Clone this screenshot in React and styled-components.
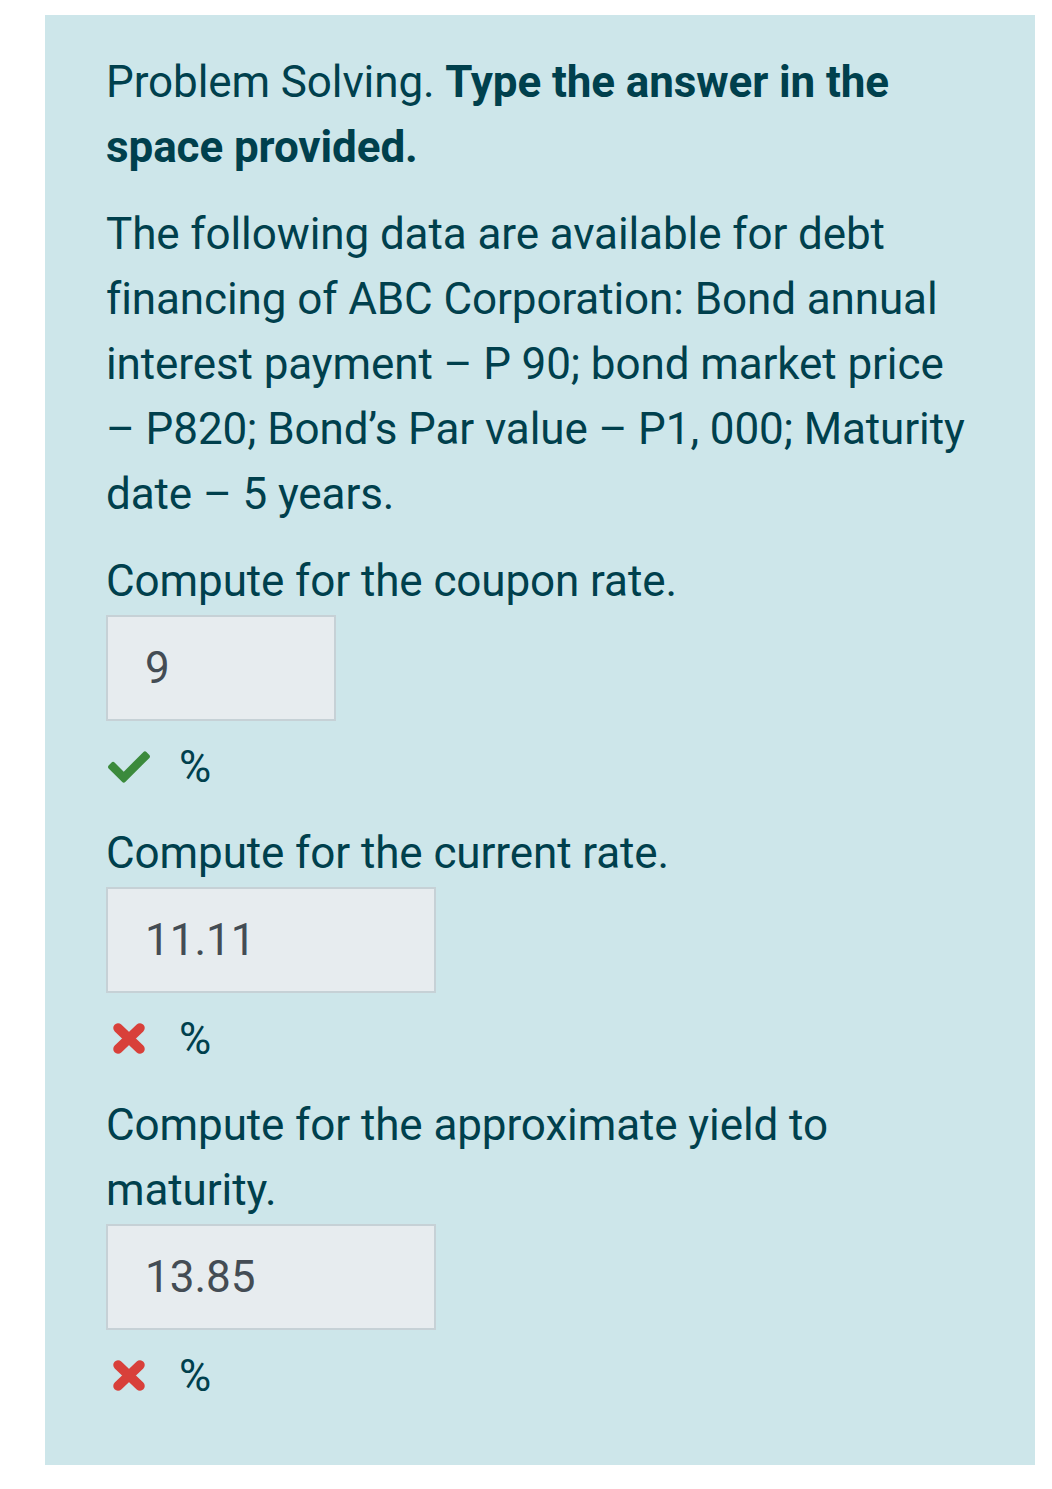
import React from "react";
import styled, { createGlobalStyle } from "styled-components";
import { FaCheck } from "react-icons/fa";

const GlobalStyle = createGlobalStyle`
  html, body {
    margin: 0;
    padding: 0;
    background: #ffffff;
  }
  body {
    font-family: Roboto, "Noto Sans", "Liberation Sans", sans-serif;
  }
`;

const questions = [
  { label: "Compute for the coupon rate.", value: "9", width: 230, correct: true },
  { label: "Compute for the current rate.", value: "11.11", width: 330, correct: false },
  {
    label: "Compute for the approximate yield to maturity.",
    value: "13.85",
    width: 330,
    correct: false,
  },
];

// heavy cross used for wrong answers
const Cross = () => (
  <svg width="34" height="33" viewBox="0 0 34 33">
    <path
      d="M6 6 L28 27 M28 6 L6 27"
      stroke="currentColor"
      strokeWidth="9.5"
      strokeLinecap="round"
      fill="none"
    />
  </svg>
);

function Question({ label, value, width, correct }) {
  return (
    <Block>
      <Text>{label}</Text>
      <AnswerBox width={width}>{value}</AnswerBox>
      <Feedback>
        <Mark correct={correct}>{correct ? <FaCheck size={42} /> : <Cross />}</Mark>
        <Unit>%</Unit>
      </Feedback>
    </Block>
  );
}

export default function App() {
  return (
    <>
      <GlobalStyle />
      <Panel>
        <Text>
          Problem Solving. <strong>Type the answer in the space provided.</strong>
        </Text>
        <Text>
          The following data are available for debt financing of ABC
          Corporation: Bond annual interest payment – P 90; bond market price –
          P820; Bond’s Par value – P1, 000; Maturity date – 5 years.
        </Text>
        {questions.map((q) => (
          <Question key={q.label} {...q} />
        ))}
      </Panel>
    </>
  );
}

const Panel = styled.div`
  margin: 15px 0 0 45px;
  width: 990px;
  height: 1450px;
  box-sizing: border-box;
  padding: 35px 60px 0 61px;
  background: #cde6ea;
  display: flex;
  flex-direction: column;
  gap: 22px;
`;

const Text = styled.p`
  margin: 0;
  font-size: 44px;
  line-height: 65px;
  color: #00404d;
  letter-spacing: -0.1px;

  strong {
    font-weight: 700;
  }
`;

const Block = styled.div`
  display: flex;
  flex-direction: column;
`;

const AnswerBox = styled.div`
  margin-top: 1px;
  width: ${(p) => p.width}px;
  height: 106px;
  box-sizing: border-box;
  border: 2px solid #c6d1d6;
  background: #e7ecef;
  padding-left: 37px;
  display: flex;
  align-items: center;
  font-size: 44px;
  color: #444c54;
`;

const Feedback = styled.div`
  display: flex;
  align-items: center;
  height: 65px;
  margin-top: 13px;
`;

const Mark = styled.span`
  display: flex;
  align-items: center;
  justify-content: center;
  width: 44px;
  margin-left: 1px;
  margin-right: 28px;
  color: ${(p) => (p.correct ? "#3b8a3c" : "#d8403a")};
`;

const Unit = styled.span`
  font-size: 44px;
  color: #00404d;
`;
